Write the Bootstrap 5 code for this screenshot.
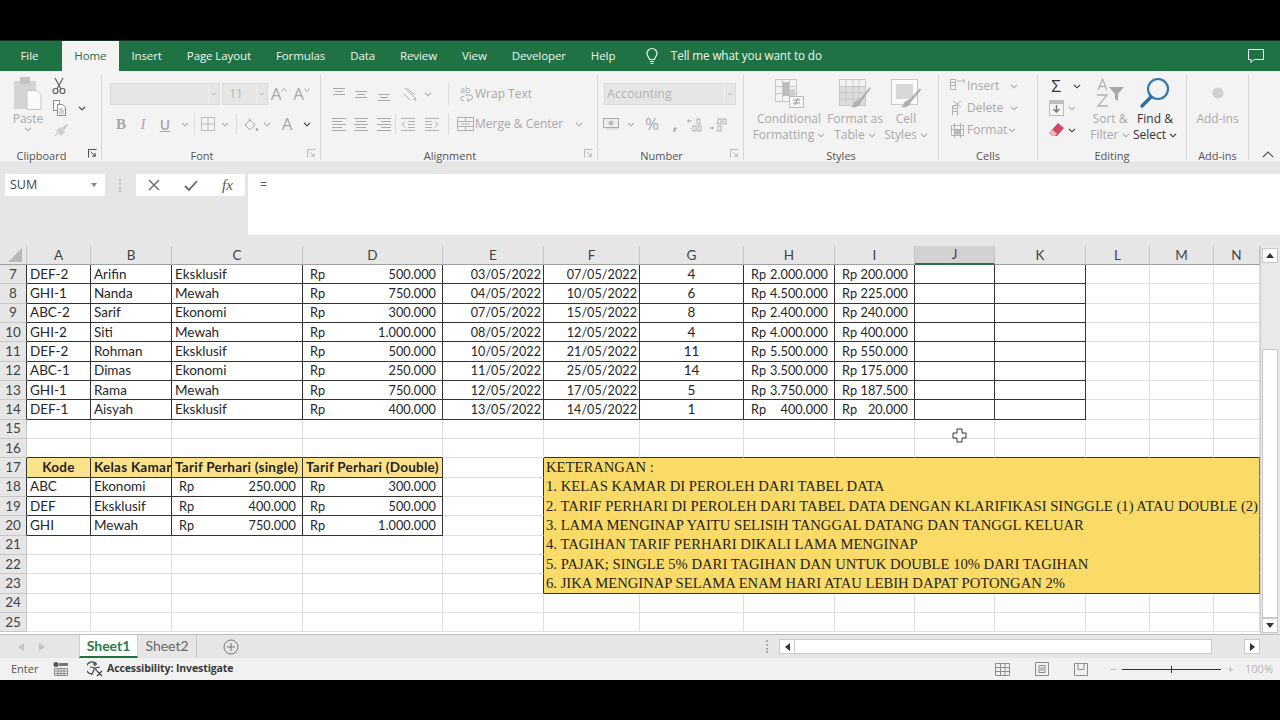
<!DOCTYPE html>
<html lang="id">
<head>
<meta charset="utf-8">
<title>Excel</title>
<link rel="stylesheet" href="https://cdn.jsdelivr.net/npm/bootstrap@5.3.0/dist/css/bootstrap.min.css">
<style>
html,body{margin:0;background:#000;overflow:hidden}
.stage{width:1280px;height:720px;padding:40px 0;background:#000;font-family:"Open Sans","Liberation Sans",sans-serif;font-size:12px;color:#444}
.xlapp{height:640px;background:#e6e6e6}
.titlebar{height:31px;background:#1f7244;color:#f2f7f3;flex:none;border-top:1px solid #12331f}
.titlebar .nav-link{color:#eef5f0;padding:0 12.5px;height:30px;line-height:30px;font-size:11.5px;letter-spacing:-.1px}
.titlebar .nav-link.active{background:#f3f3f3;color:#2a6b48}
.tabfile{margin-left:8px;margin-right:11px}
.tellme{margin-left:16px;gap:11px;letter-spacing:-.1px;color:#eef5f0;font-size:11.7px}
.ribbon{height:92px;background:#f3f3f3;flex:none;padding:4px 0 2px;border-bottom:1px solid #e0e0e0;color:#a9a9a9}
.rg{border-right:1px solid #d6d6d6;flex:none}
.g1{width:102px}.g2{width:219px}.g3{width:277px}.g4{width:146px}.g5{width:195px}.g6{width:99px}.g7{width:149px}.g8{width:62px}
.rbody{height:74px;flex:none}
.rlabel{height:13px;line-height:13px;font-size:11px;color:#555;flex:none}
.launch{width:18px;height:13px;flex:none}
.two{padding-top:8px;gap:8px}
.trow{height:22px;flex:none}
.pl2px{padding-left:2px}.pl6{padding-left:6px}.pl7{padding-left:7px}.pl8{padding-left:8px}
.cell-i{display:inline-flex;align-items:center;justify-content:center;flex:none;height:22px}
.w8{width:8px}.w10{width:10px}.w12{width:12px}.w14{width:14px}.w18{width:18px}.w19{width:19px}.w20{width:20px}.w21{width:21px}.w22{width:22px}.w23{width:23px}.w24{width:24px}.w26{width:26px}.w32{width:32px}
.gap2{width:2px;flex:none}.gap4{width:4px;flex:none}.gap7{width:7px;flex:none}.gap8{width:8px;flex:none}.gap12{width:12px;flex:none}.gap15{width:15px;flex:none}
.vsep{width:1px;height:22px;background:#dcdcdc;flex:none}
.combo{height:22px;background:#e6e6e6;border:1px solid #dadada;color:#b3b3b3;flex:none}
.cb-font{width:110px}.cb-size{width:46px;margin-left:2px}.cb-num{width:132px;padding-left:2px;font-size:12.5px}
.cb-end{width:11px;height:100%;border-left:1px solid #f0f0f0;margin-left:auto}
.cb-size .cb-mid{width:26px;text-align:center}
.bigb{flex:none;line-height:16px;text-align:center;white-space:nowrap}
.bigi{height:36px;flex:none}
.bg-cf{width:74px}.bg-ft{width:58px}.bg-cs{width:44px}.bg-sort{width:46px}.bg-find{width:44px}.bg-add{width:61px}.bg-paste{width:38px;margin-left:9px}
.cf-pad{padding-left:8px}
.dark-t{color:#333}
.col-col1{width:49px;padding-left:8px;flex:none}
.smallc{width:42px;margin-left:3px;flex:none}
.celltxt{width:41px;flex:none}
.bold-i{font-family:"Liberation Serif",serif;font-size:15px;font-weight:700;color:#a8a8a8}
.ital-i{font-family:"Liberation Serif",serif;font-size:15px;font-style:italic;color:#a8a8a8}
.und-i{font-size:14px;text-decoration:underline;color:#a8a8a8;font-weight:600}
.big-a{font-size:17px;line-height:22px;color:#a8a8a8}
.big-s{font-size:17px;line-height:22px;color:#333}
.collapse-b{flex:1;align-items:flex-end;justify-content:center;padding-left:6px;height:87px;color:#666}
.fbar{height:83px;background:#e6e6e6;padding-top:11px;flex:none}
.namebox{width:100px;height:22px;margin-left:5px;background:#fff;padding-left:5px;font-size:12.5px;color:#444;flex:none}
.dots{width:31px;flex:none;height:22px}
.fxbox{width:109px;height:22px;background:#fff;flex:none;color:#777}
.fxin{flex:1;height:61px;margin-left:3px;background:#fff;padding:0 0 0 12px;line-height:22px;font-size:12.5px;color:#555}
.fx-t{font-family:"Liberation Serif",serif;font-style:italic;font-size:15px;color:#555}
.sheetarea{height:388px;flex:none}
.gridwrap{width:1260px;height:388px;background:#fff;overflow:hidden;flex:none}
.sheet{width:1260px;table-layout:fixed;border-collapse:separate;border-spacing:0;margin:0;--bs-table-bg:transparent;font-family:Lato,"Liberation Sans",sans-serif;font-size:13.5px;color:#262626;--bs-body-color:#262626}
.sheet th,.sheet td{padding:0 6px 0 3px;height:19.33px;line-height:17px;border:0;border-right:1px solid #dedede;border-bottom:1px solid #dedede;white-space:nowrap;overflow:hidden;font-weight:400;vertical-align:middle;box-shadow:none}
.sheet thead th{height:19px;background:#e6e6e6;color:#444;text-align:center;padding:0;border-right:1px solid #c4c4c4;border-bottom:1px solid #9f9f9f}
.sheet tbody th{background:#e6e6e6;color:#444;text-align:center;padding:0;border-right:1px solid #c4c4c4;border-bottom:1px solid #c8c8c8}
.c0{width:27px}.ca{width:64px}.cb{width:81px}.cc{width:131px}.cd{width:140px}.ce{width:101px}.cf{width:96px}.cg{width:104px}.ch{width:91px}.ci{width:80px}.cj{width:80px}.ck{width:91px}.cl{width:64px}.cm{width:64px}.cn{width:46px}
.sheet thead th.hot{background:#d2d2d2;border-bottom:2px solid #217346}
.sheet tr.ledger td:nth-child(-n+12),.sheet tr.ref td:nth-child(-n+5){border-right-color:#333;border-bottom-color:#333}
.sheet tr.ledger th,.sheet tr.ref th{border-right-color:#333}
.sheet tr.over td.dk-b{border-bottom-color:#333}
.sheet td.dk-r{border-right-color:#333}
.sheet td.ctr{text-align:center;padding:0}
.sheet td.rgt{text-align:right;padding:0 2px 0 0;font-size:12.6px;letter-spacing:.05px}
.sheet td.mon{padding:0 6px 0 7px;font-size:12.7px;letter-spacing:.05px}
.sheet td.head-y{background:#fde28c;font-weight:700;color:#1f1f1f;padding:0 3px;letter-spacing:.25px}
.sheet td.head-y.ctr{padding:0}
.sheet tr td.note{background:#fadb68;font-family:"Liberation Serif",serif;font-size:14.65px;color:#222;padding:0 0 0 2px;border-right-color:#8a7a3a;border-bottom-color:#fadb68}
.sheet tr td.note-end{border-bottom-color:#333}
.plus-cur{position:absolute;left:952px;top:182px;width:15px;height:15px}
.vscroll{width:20px;height:388px;background:#e9e9e9;padding:2px 2px 1px 1px;border-left:1px solid #cfcfcf;flex:none}
.sbtn{background:#fff;border:1px solid #c9c9c9;color:#333;flex:none}
.vb{height:15px;width:16px}
.vgap{height:86px;flex:none}
.vthumb{flex:1;background:#fff;border:1px solid #c9c9c9;width:16px}
.sheetbar{height:24px;background:#e6e6e6;border-top:1px solid #bdbdbd;flex:none}
.tabarrows{width:79px;gap:15px;padding-left:18px;color:#c4c4c4;flex:none}
.stab{height:23px;width:59px;text-align:center;line-height:22px;font-family:Lato,sans-serif;font-size:14px;color:#666;flex:none}
.stab.on{background:#fff;color:#2a7a4c;font-weight:700;border-bottom:2px solid #217346;border-left:1px solid #cfcfcf;border-right:1px solid #cfcfcf}
.stab.off{border-right:1px solid #c8c8c8}
.addsheet{margin-left:26px;width:20px;color:#777;flex:none}
.hdots{margin-left:auto;width:13px;flex:none;color:#aaa}
.hscroll{width:481px;height:15px;margin-right:20px;flex:none}
.hb{width:16px;height:15px}
.hthumb{width:417px;height:15px;background:#fff;border:1px solid #c9c9c9;border-left:0;flex:none}
.hgap{flex:1}
.statusbar{height:22px;background:#f1f1f1;color:#555;font-size:11px;flex:none}
.st-enter{margin-left:11px;width:42px;flex:none}
.st-macro{width:24px;flex:none}
.st-acc{margin-left:10px;gap:4px;color:#3a3a3a;font-weight:700;font-family:"Open Sans",sans-serif;font-size:10.5px;letter-spacing:-.1px}
.st-views{margin-left:auto;gap:25px;color:#999}
.zoomer{margin-left:22px;width:170px;gap:6px;color:#aaa}
.ztrack{width:99px;height:1px;background:#333;position:relative;flex:none}
.ztick{position:absolute;left:49px;top:-3px;width:1px;height:7px;background:#333}
.pct{margin-left:auto;margin-right:7px;color:#b4b4b4;font-size:11px}
</style>
</head>
<body>
<svg class="d-none" xmlns="http://www.w3.org/2000/svg">
<symbol id="cv" viewBox="0 0 8 5"><path d="M1 .8l3 3 3-3" fill="none" stroke="currentColor" stroke-width="1.1"/></symbol>
<symbol id="lau" viewBox="0 0 10 10"><path d="M.5 9.5v-9h9M3 3l5 5M8 4.500v3.500H4.500" fill="none" stroke="currentColor"/></symbol>
<symbol id="l3t" viewBox="0 0 16 16"><path d="M2 2.500h12M4 5.500h8M2 8.500h12" stroke="currentColor" fill="none"/></symbol>
<symbol id="l3m" viewBox="0 0 16 16"><path d="M2 5.500h12M4 8.500h8M2 11.500h12" stroke="currentColor" fill="none"/></symbol>
<symbol id="l3b" viewBox="0 0 16 16"><path d="M2 8.500h12M4 11.500h8M2 14.500h12" stroke="currentColor" fill="none"/></symbol>
<symbol id="a-l" viewBox="0 0 16 16"><path d="M1 2.500h14M1 5.500h10M1 8.500h14M1 11.500h10M1 14.500h14" stroke="currentColor" fill="none"/></symbol>
<symbol id="a-c" viewBox="0 0 16 16"><path d="M1 2.500h14M3 5.500h10M1 8.500h14M3 11.500h10M1 14.500h14" stroke="currentColor" fill="none"/></symbol>
<symbol id="a-r" viewBox="0 0 16 16"><path d="M1 2.500h14M5 5.500h10M1 8.500h14M5 11.500h10M1 14.500h14" stroke="currentColor" fill="none"/></symbol>
</svg>
<div class="stage">
<div class="xlapp d-flex flex-column">

<!-- tabs -->
<div class="titlebar d-flex align-items-start">
  <ul class="nav flex-nowrap">
    <li class="nav-item tabfile"><a class="nav-link" href="#">File</a></li>
    <li class="nav-item"><a class="nav-link active" href="#">Home</a></li>
    <li class="nav-item"><a class="nav-link" href="#">Insert</a></li>
    <li class="nav-item"><a class="nav-link" href="#">Page Layout</a></li>
    <li class="nav-item"><a class="nav-link" href="#">Formulas</a></li>
    <li class="nav-item"><a class="nav-link" href="#">Data</a></li>
    <li class="nav-item"><a class="nav-link" href="#">Review</a></li>
    <li class="nav-item"><a class="nav-link" href="#">View</a></li>
    <li class="nav-item"><a class="nav-link" href="#">Developer</a></li>
    <li class="nav-item"><a class="nav-link" href="#">Help</a></li>
  </ul>
  <div class="tellme d-flex align-items-center h-100">
    <svg width="16" height="18" viewBox="0 0 16 18" fill="none" stroke="#f0f6f2" stroke-width="1.2"><path d="M5.500 12.500C5 10 3 9 3 6.500a5 5 0 0 1 10 0c0 2.500-2 3.500-2.500 6z"/><path d="M6 14.500h4M6.500 16.500h3"/></svg>
    <span>Tell me what you want to do</span>
  </div>
  <div class="ms-auto d-flex align-items-center h-100 pe-3">
    <svg width="16" height="16" viewBox="0 0 16 16" fill="none" stroke="#f0f6f2"><path d="M.5 1.500h15v10H6l-3 3v-3H.5z"/></svg>
  </div>
</div>

<!-- ribbon -->
<div class="ribbon d-flex">
  <!-- clipboard -->
  <div class="rg g1 d-flex flex-column">
    <div class="rbody d-flex">
      <div class="bigb bg-paste d-flex flex-column align-items-center">
        <div class="bigi d-flex align-items-center justify-content-center">
          <svg width="30" height="35" viewBox="0 0 30 35"><rect x="1" y="5" width="22" height="28" fill="#d4d4d4"/><rect x="7" y="1" width="10" height="7" fill="#c4c4c4"/><path d="M14 14.500h10l4 4v15H14z" fill="#fafafa" stroke="#c6c6c6"/></svg>
        </div>
        <div>Paste</div>
        <svg width="8" height="5"><use href="#cv"/></svg>
      </div>
      <div class="smallc d-flex flex-column">
        <div class="trow d-flex align-items-center"><span class="cell-i w18">
          <svg width="14" height="18" viewBox="0 0 14 18" fill="none" stroke="#5f5f5f" stroke-width="1.200"><circle cx="3.500" cy="14" r="2.500"/><circle cx="10.500" cy="14" r="2.500"/><path d="M5 12L11 1M9 12L3 1"/></svg></span></div>
        <div class="trow d-flex align-items-center"><span class="cell-i w18">
          <svg width="14" height="16" viewBox="0 0 14 16" fill="#fff" stroke="#8a8a8a"><path d="M1.500 .5h6v10h-6z"/><path d="M5.500 4.500h5l3 3v8h-8z"/><path d="M7 9h4M7 11h5M7 13h5" stroke-width=".8"/></svg></span>
          <span class="cell-i w10"></span><span class="cell-i w8 dark-t"><svg width="8" height="5"><use href="#cv"/></svg></span>
        </div>
        <div class="trow d-flex align-items-center"><span class="cell-i w22">
          <svg width="14" height="14" viewBox="0 0 14 14"><path d="M8 5l5-4 1 1-4 5z" fill="#c4c4c4"/><path d="M2 8l4-4 5 5-4 4z" fill="#cfcfcf"/><path d="M1 13l3-3" stroke="#bbb"/></svg></span></div>
      </div>
    </div>
    <div class="rlabel d-flex"><span class="flex-grow-1 text-center">Clipboard</span><span class="launch d-flex justify-content-center dark-t"><svg width="9" height="9"><use href="#lau"/></svg></span></div>
  </div>

  <!-- font -->
  <div class="rg g2 d-flex flex-column">
    <div class="rbody two d-flex flex-column">
      <div class="trow d-flex align-items-center pl8">
        <div class="combo cb-font d-flex align-items-center"><span class="cb-end d-flex align-items-center justify-content-center"><svg width="6" height="4"><use href="#cv"/></svg></span></div>
        <div class="combo cb-size d-flex align-items-center"><span class="cb-mid">11</span><span class="cb-end d-flex align-items-center justify-content-center"><svg width="6" height="4"><use href="#cv"/></svg></span></div>
        <span class="cell-i w22 big-a">A<svg width="6" height="4" class="mb-2"><path d="M.5 3.500l2.500-3 2.500 3" fill="none" stroke="#a8a8a8"/></svg></span>
        <span class="cell-i w23 big-a">A<svg width="6" height="4" class="mb-2"><path d="M.5.5l2.500 3 2.500-3" fill="none" stroke="#a8a8a8"/></svg></span>
      </div>
      <div class="trow d-flex align-items-center pl8">
        <span class="cell-i w22 bold-i">B</span><span class="cell-i w22 ital-i">I</span><span class="cell-i w22 und-i">U</span>
        <span class="cell-i w18"><svg width="8" height="5"><use href="#cv"/></svg></span>
        <span class="vsep"></span>
        <span class="cell-i w26"><svg width="16" height="16" viewBox="0 0 16 16" fill="none" stroke="#bdbdbd"><path d="M1.500 1.500h13v13h-13zM8 1.500v13M1.500 8h13"/></svg></span>
        <span class="cell-i w8"><svg width="8" height="5"><use href="#cv"/></svg></span>
        <span class="gap7"></span>
        <span class="vsep"></span>
        <span class="cell-i w26"><svg width="17" height="17" viewBox="0 0 17 17" fill="none" stroke="#a8a8a8"><path d="M3 9l5-5 5 5-4.500 4.500a1 1 0 0 1-1 0z"/><path d="M7 2l2 3"/><path d="M15 12c-1 1.500-1 2.500 0 3 1-.5 1-1.500 0-3z" fill="#c4c4c4"/></svg></span>
        <span class="cell-i w8"><svg width="8" height="5"><use href="#cv"/></svg></span>
        <span class="cell-i w32 big-a">A</span>
        <span class="cell-i w8 dark-t"><svg width="8" height="5"><use href="#cv"/></svg></span>
      </div>
    </div>
    <div class="rlabel d-flex"><span class="flex-grow-1 text-center">Font</span><span class="launch d-flex justify-content-center text-secondary opacity-50"><svg width="9" height="9"><use href="#lau"/></svg></span></div>
  </div>

  <!-- alignment -->
  <div class="rg g3 d-flex flex-column">
    <div class="rbody two d-flex flex-column">
      <div class="trow d-flex align-items-center pl7">
        <span class="cell-i w22"><svg width="16" height="16"><use href="#l3t"/></svg></span>
        <span class="cell-i w22"><svg width="16" height="16"><use href="#l3m"/></svg></span>
        <span class="cell-i w23"><svg width="16" height="16"><use href="#l3b"/></svg></span>
        <span class="gap2"></span>
        <span class="cell-i w26"><svg width="16" height="16" viewBox="0 0 16 16" fill="none" stroke="#b0b0b0"><path d="M3 2l9 9M5 2l8 7M2 8l6 6"/><path d="M11 13l3 1-1-3"/></svg></span>
        <span class="cell-i w10"><svg width="8" height="5"><use href="#cv"/></svg></span>
        <span class="gap15"></span><span class="vsep"></span><span class="gap8"></span>
        <span class="cell-i w18"><svg width="15" height="18" viewBox="0 0 15 18" fill="none" stroke="#aaa"><text x="1" y="8" font-size="9" font-family="Open Sans, sans-serif" fill="#aaa" stroke="none">ab</text><text x="1" y="16" font-size="9" font-family="Open Sans, sans-serif" fill="#aaa" stroke="none">c</text><path d="M6 10h5a2.500 2.500 0 0 1 0 5H8M9.500 13.500L8 15l1.500 1.500"/></svg></span>
        <span>Wrap Text</span>
      </div>
      <div class="trow d-flex align-items-center pl7">
        <span class="cell-i w22"><svg width="16" height="16"><use href="#a-l"/></svg></span>
        <span class="cell-i w22"><svg width="16" height="16"><use href="#a-c"/></svg></span>
        <span class="cell-i w23"><svg width="16" height="16"><use href="#a-r"/></svg></span>
        <span class="vsep"></span>
        <span class="cell-i w24"><svg width="16" height="16" viewBox="0 0 16 16" fill="none" stroke="#b0b0b0"><path d="M1 2.500h14M8 5.500h7M8 8.500h7M8 11.500h7M1 14.500h14M5 5.500l-3 3 3 3" /></svg></span>
        <span class="cell-i w24"><svg width="16" height="16" viewBox="0 0 16 16" fill="none" stroke="#b0b0b0"><path d="M1 2.500h14M1 5.500h7M1 8.500h7M1 11.500h7M1 14.500h14M11 5.500l3 3-3 3"/></svg></span>
        <span class="gap4"></span><span class="vsep"></span><span class="gap7"></span>
        <span class="cell-i w19"><svg width="17" height="16" viewBox="0 0 17 16" fill="none" stroke="#b0b0b0"><path d="M.5 1.500h16v13H.5zM.5 5.500h16M.5 10.500h16M8.500 1.500v4M8.500 10.500v4M4 8h9"/></svg></span>
        <span>Merge &amp; Center</span>
        <span class="gap12"></span>
        <svg width="8" height="5"><use href="#cv"/></svg>
      </div>
    </div>
    <div class="rlabel d-flex"><span class="flex-grow-1 text-center">Alignment</span><span class="launch d-flex justify-content-center text-secondary opacity-50"><svg width="9" height="9"><use href="#lau"/></svg></span></div>
  </div>

  <!-- number -->
  <div class="rg g4 d-flex flex-column">
    <div class="rbody two d-flex flex-column">
      <div class="trow d-flex align-items-center pl6">
        <div class="combo cb-num d-flex align-items-center">Accounting<span class="cb-end d-flex align-items-center justify-content-center"><svg width="6" height="4"><use href="#cv"/></svg></span></div>
      </div>
      <div class="trow d-flex align-items-center pl2px">
        <span class="cell-i w24"><svg width="18" height="16" viewBox="0 0 18 16"><rect x=".5" y="2.500" width="15" height="9" fill="#eee" stroke="#aaa"/><circle cx="8" cy="7" r="2.500" fill="#bbb"/><path d="M3 13h13" stroke="#ccc"/></svg></span>
        <span class="cell-i w14"><svg width="8" height="5"><use href="#cv"/></svg></span>
        <span class="gap2"></span>
        <span class="cell-i w24 big-a">%</span>
        <span class="cell-i w22 big-a fw-bold">,</span>
        <span class="cell-i w20"><svg width="18" height="16" viewBox="0 0 18 16" fill="#b0b0b0"><path d="M2 3l-2 2 2 2zM2 4.500h3v1H2z"/><rect x="7" y="7" width="1" height="1"/><rect x="3" y="12" width="1" height="1"/><rect x="10" y="3" width="3" height="5" fill="none" stroke="#b0b0b0"/><rect x="6" y="10" width="3" height="5" fill="none" stroke="#b0b0b0"/><rect x="11" y="10" width="3" height="5" fill="none" stroke="#b0b0b0"/></svg></span>
        <span class="cell-i w24"><svg width="18" height="16" viewBox="0 0 18 16" fill="#b0b0b0"><rect x="7" y="7" width="1" height="1"/><rect x="9" y="3" width="3" height="5" fill="none" stroke="#b0b0b0"/><rect x="14" y="3" width="3" height="5" fill="none" stroke="#b0b0b0"/><path d="M3 10l2 2-2 2zM.5 11.500h3v1h-3z"/><rect x="7" y="14" width="1" height="1"/><rect x="9" y="10" width="3" height="5" fill="none" stroke="#b0b0b0"/></svg></span>
      </div>
    </div>
    <div class="rlabel d-flex"><span class="flex-grow-1 text-center">Number</span><span class="launch d-flex justify-content-center text-secondary opacity-50"><svg width="9" height="9"><use href="#lau"/></svg></span></div>
  </div>

  <!-- styles -->
  <div class="rg g5 d-flex flex-column">
    <div class="rbody d-flex cf-pad">
      <div class="bigb bg-cf">
        <div class="bigi d-flex align-items-center justify-content-center">
          <svg width="30" height="30" viewBox="0 0 30 30"><path d="M1.500 1.500h21v22h-21zM8.500 1.500v22M15.500 1.500v22M1.500 8.500h21M1.500 15.500h21" fill="none" stroke="#c8c8c8"/><rect x="9" y="4" width="6" height="14" fill="#bdbdbd"/><rect x="16" y="11" width="5" height="8" fill="#cfcfcf"/><rect x="15.500" y="18.500" width="14" height="11" fill="#f6f6f6" stroke="#bbb"/><path d="M19 22h7M19 25h7M24 20l-3 7" stroke="#999" fill="none"/></svg>
        </div>
        <div>Conditional</div>
        <div>Formatting <svg width="8" height="5"><use href="#cv"/></svg></div>
      </div>
      <div class="bigb bg-ft">
        <div class="bigi d-flex align-items-center justify-content-center">
          <svg width="32" height="30" viewBox="0 0 32 30"><rect x=".5" y="1.500" width="26" height="7" fill="#f3f3f3" stroke="#c8c8c8"/><rect x=".5" y="8.500" width="26" height="19" fill="#dcdcdc" stroke="#c8c8c8"/><path d="M7 1.500v26M14 1.500v26M20 1.500v26M.5 14.500h26M.5 21h26" stroke="#c8c8c8" fill="none"/><path d="M31 9L21 21l-4 2c-3 1-2 5-5 6 5 1 9-1 10-5L31.500 11z" fill="#b0b0b0"/></svg>
        </div>
        <div>Format as</div>
        <div>Table <svg width="8" height="5"><use href="#cv"/></svg></div>
      </div>
      <div class="bigb bg-cs">
        <div class="bigi d-flex align-items-center justify-content-center">
          <svg width="30" height="30" viewBox="0 0 30 30"><rect x=".5" y="1.500" width="26" height="25" fill="#fafafa" stroke="#c8c8c8"/><rect x="5" y="6" width="17" height="15" fill="#d8d8d8"/><path d="M29 10L19 21l-4 2c-3 1-2 5-5 6 5 1 9-1 10-5L30 12z" fill="#b0b0b0"/></svg>
        </div>
        <div>Cell</div>
        <div>Styles <svg width="8" height="5"><use href="#cv"/></svg></div>
      </div>
    </div>
    <div class="rlabel text-center">Styles</div>
  </div>

  <!-- cells -->
  <div class="rg g6 d-flex flex-column">
    <div class="rbody d-flex flex-column pl8">
      <div class="trow d-flex align-items-center"><span class="cell-i w20"><svg width="17" height="16" viewBox="0 0 17 16" fill="none" stroke="#b4b4b4"><path d="M1.500 1.500h5v3h-5zM1.500 4.500v7M6.500 4.500v7M1.500 7.500h5M1.500 11.500h5M8 3h7M14 1l2 2-2 2"/></svg></span><span class="celltxt">Insert</span><span class="cell-i w12"><svg width="8" height="5"><use href="#cv"/></svg></span></div>
      <div class="trow d-flex align-items-center"><span class="cell-i w20"><svg width="17" height="16" viewBox="0 0 17 16" fill="none" stroke="#b4b4b4"><path d="M3.500 5.500h5v3h-5zM3.500 8.500v7M8.500 8.500v7M3.500 11.500h5M4 1l8 6M12 1L4 7"/></svg></span><span class="celltxt">Delete</span><span class="cell-i w12"><svg width="8" height="5"><use href="#cv"/></svg></span></div>
      <div class="trow d-flex align-items-center"><span class="cell-i w20"><svg width="17" height="17" viewBox="0 0 17 17" fill="none" stroke="#b4b4b4"><path d="M2.500 3.500h12v10h-12zM2.500 7.500h12M5.500 1v15M11.500 1v15"/><rect x="6.500" y="8" width="4" height="4" fill="#bbb"/></svg></span><span>Format</span><span class="cell-i w10"><svg width="8" height="5"><use href="#cv"/></svg></span></div>
    </div>
    <div class="rlabel text-center">Cells</div>
  </div>

  <!-- editing -->
  <div class="rg g7 d-flex flex-column">
    <div class="rbody d-flex">
      <div class="col-col1 d-flex flex-column">
        <div class="trow d-flex align-items-center"><span class="cell-i w20 big-s">Σ</span><span class="cell-i w21 dark-t"><svg width="8" height="5"><use href="#cv"/></svg></span></div>
        <div class="trow d-flex align-items-center"><span class="cell-i w20"><svg width="15" height="16" viewBox="0 0 15 16"><rect x=".5" y=".5" width="14" height="15" fill="#f4f4f4" stroke="#bdbdbd"/><rect x="1" y="1" width="13" height="3" fill="#bdbdbd"/><path d="M7.500 5v6M4.500 9l3 3 3-3" fill="none" stroke="#777" stroke-width="1.400"/></svg></span><span class="cell-i w12"><svg width="8" height="5"><use href="#cv"/></svg></span></div>
        <div class="trow d-flex align-items-center"><span class="cell-i w20"><svg width="16" height="14" viewBox="0 0 16 14"><path d="M10 0l6 5-7 8H4L1 10z" fill="#d8455e"/><path d="M1 10l3-3.500 5 4L7 13H4z" fill="#eab4bf"/></svg></span><span class="cell-i w12 dark-t"><svg width="8" height="5"><use href="#cv"/></svg></span></div>
      </div>
      <div class="bigb bg-sort">
        <div class="bigi d-flex align-items-center justify-content-center">
          <svg width="34" height="30" viewBox="0 0 34 30"><path d="M5 12L9.500 1 14 12M6.500 8.500h6M4 17h10L5 28h10" fill="none" stroke="#b4b4b4" stroke-width="1.300"/><path d="M16 9h15l-6 7v7l-3-2v-5z" fill="#a8a8a8"/></svg>
        </div>
        <div>Sort &amp;</div>
        <div>Filter <svg width="8" height="5"><use href="#cv"/></svg></div>
      </div>
      <div class="bigb bg-find dark-t">
        <div class="bigi d-flex align-items-center justify-content-center">
          <svg width="32" height="32" viewBox="0 0 32 32" fill="none"><circle cx="19" cy="12" r="10" stroke="#2f78b4" stroke-width="2.200"/><path d="M12 20L3 29" stroke="#2b6ea8" stroke-width="3.400" stroke-linecap="round"/></svg>
        </div>
        <div>Find &amp;</div>
        <div>Select <svg width="8" height="5"><use href="#cv"/></svg></div>
      </div>
    </div>
    <div class="rlabel text-center">Editing</div>
  </div>

  <!-- add-ins -->
  <div class="rg g8 d-flex flex-column">
    <div class="rbody d-flex">
      <div class="bigb bg-add">
        <div class="bigi d-flex align-items-center justify-content-center"><svg width="14" height="14" viewBox="0 0 14 14"><circle cx="7" cy="7" r="5.500" fill="#d0d0d0"/></svg></div>
        <div>Add-ins</div>
      </div>
    </div>
    <div class="rlabel text-center">Add-ins</div>
  </div>
  <div class="collapse-b d-flex"><svg width="12" height="7" viewBox="0 0 12 7" fill="none" stroke="#555" stroke-width="1.200" class="mb-1"><path d="M1 6l5-5 5 5"/></svg></div>
</div>

<!-- formula bar -->
<div class="fbar d-flex align-items-start">
  <div class="namebox d-flex align-items-center justify-content-between pe-2"><span>SUM</span><svg width="6" height="4" viewBox="0 0 6 4"><path d="M0 0h6L3 4z" fill="#888"/></svg></div>
  <div class="dots d-flex align-items-center justify-content-center"><svg width="3" height="13" viewBox="0 0 3 13" fill="#bbb"><rect y="0" width="2" height="2"/><rect y="4" width="2" height="2"/><rect y="8" width="2" height="2"/><rect y="11" width="2" height="2"/></svg></div>
  <div class="fxbox d-flex align-items-center justify-content-around">
    <svg width="12" height="12" viewBox="0 0 12 12" fill="none" stroke="#666" stroke-width="1.400"><path d="M1 1l10 10M11 1L1 11"/></svg>
    <svg width="14" height="11" viewBox="0 0 14 11" fill="none" stroke="#666" stroke-width="1.800"><path d="M1 6l4 4 8-9"/></svg>
    <span class="fx-t">fx</span>
  </div>
  <div class="fxin">=</div>
</div>

<!-- grid -->
<div class="sheetarea d-flex">
<div class="gridwrap position-relative">
<table class="table sheet">
<colgroup><col class="c0"><col class="ca"><col class="cb"><col class="cc"><col class="cd"><col class="ce"><col class="cf"><col class="cg"><col class="ch"><col class="ci"><col class="cj"><col class="ck"><col class="cl"><col class="cm"><col class="cn"></colgroup>
<thead><tr><th><svg width="14" height="14" viewBox="0 0 14 14" class="d-block ms-auto me-1"><path d="M14 0v14H0z" fill="#b8b8b8"/></svg></th><th>A</th><th>B</th><th>C</th><th>D</th><th>E</th><th>F</th><th>G</th><th>H</th><th>I</th><th class="hot">J</th><th>K</th><th>L</th><th>M</th><th>N</th></tr></thead>
<tbody>
<tr class="ledger"><th>7</th><td>DEF-2</td><td>Arifin</td><td>Eksklusif</td><td class="mon"><div class="d-flex justify-content-between"><span>Rp</span><span>500.000</span></div></td><td class="rgt">03/05/2022</td><td class="rgt">07/05/2022</td><td class="ctr">4</td><td class="mon"><div class="d-flex justify-content-between"><span>Rp</span><span>2.000.000</span></div></td><td class="mon"><div class="d-flex justify-content-between"><span>Rp</span><span>200.000</span></div></td><td></td><td></td><td></td><td></td><td></td></tr>
<tr class="ledger"><th>8</th><td>GHI-1</td><td>Nanda</td><td>Mewah</td><td class="mon"><div class="d-flex justify-content-between"><span>Rp</span><span>750.000</span></div></td><td class="rgt">04/05/2022</td><td class="rgt">10/05/2022</td><td class="ctr">6</td><td class="mon"><div class="d-flex justify-content-between"><span>Rp</span><span>4.500.000</span></div></td><td class="mon"><div class="d-flex justify-content-between"><span>Rp</span><span>225.000</span></div></td><td></td><td></td><td></td><td></td><td></td></tr>
<tr class="ledger"><th>9</th><td>ABC-2</td><td>Sarif</td><td>Ekonomi</td><td class="mon"><div class="d-flex justify-content-between"><span>Rp</span><span>300.000</span></div></td><td class="rgt">07/05/2022</td><td class="rgt">15/05/2022</td><td class="ctr">8</td><td class="mon"><div class="d-flex justify-content-between"><span>Rp</span><span>2.400.000</span></div></td><td class="mon"><div class="d-flex justify-content-between"><span>Rp</span><span>240.000</span></div></td><td></td><td></td><td></td><td></td><td></td></tr>
<tr class="ledger"><th>10</th><td>GHI-2</td><td>Siti</td><td>Mewah</td><td class="mon"><div class="d-flex justify-content-between"><span>Rp</span><span>1.000.000</span></div></td><td class="rgt">08/05/2022</td><td class="rgt">12/05/2022</td><td class="ctr">4</td><td class="mon"><div class="d-flex justify-content-between"><span>Rp</span><span>4.000.000</span></div></td><td class="mon"><div class="d-flex justify-content-between"><span>Rp</span><span>400.000</span></div></td><td></td><td></td><td></td><td></td><td></td></tr>
<tr class="ledger"><th>11</th><td>DEF-2</td><td>Rohman</td><td>Eksklusif</td><td class="mon"><div class="d-flex justify-content-between"><span>Rp</span><span>500.000</span></div></td><td class="rgt">10/05/2022</td><td class="rgt">21/05/2022</td><td class="ctr">11</td><td class="mon"><div class="d-flex justify-content-between"><span>Rp</span><span>5.500.000</span></div></td><td class="mon"><div class="d-flex justify-content-between"><span>Rp</span><span>550.000</span></div></td><td></td><td></td><td></td><td></td><td></td></tr>
<tr class="ledger"><th>12</th><td>ABC-1</td><td>Dimas</td><td>Ekonomi</td><td class="mon"><div class="d-flex justify-content-between"><span>Rp</span><span>250.000</span></div></td><td class="rgt">11/05/2022</td><td class="rgt">25/05/2022</td><td class="ctr">14</td><td class="mon"><div class="d-flex justify-content-between"><span>Rp</span><span>3.500.000</span></div></td><td class="mon"><div class="d-flex justify-content-between"><span>Rp</span><span>175.000</span></div></td><td></td><td></td><td></td><td></td><td></td></tr>
<tr class="ledger"><th>13</th><td>GHI-1</td><td>Rama</td><td>Mewah</td><td class="mon"><div class="d-flex justify-content-between"><span>Rp</span><span>750.000</span></div></td><td class="rgt">12/05/2022</td><td class="rgt">17/05/2022</td><td class="ctr">5</td><td class="mon"><div class="d-flex justify-content-between"><span>Rp</span><span>3.750.000</span></div></td><td class="mon"><div class="d-flex justify-content-between"><span>Rp</span><span>187.500</span></div></td><td></td><td></td><td></td><td></td><td></td></tr>
<tr class="ledger"><th>14</th><td>DEF-1</td><td>Aisyah</td><td>Eksklusif</td><td class="mon"><div class="d-flex justify-content-between"><span>Rp</span><span>400.000</span></div></td><td class="rgt">13/05/2022</td><td class="rgt">14/05/2022</td><td class="ctr">1</td><td class="mon"><div class="d-flex justify-content-between"><span>Rp</span><span>400.000</span></div></td><td class="mon"><div class="d-flex justify-content-between"><span>Rp</span><span>20.000</span></div></td><td></td><td></td><td></td><td></td><td></td></tr>
<tr><th>15</th><td></td><td></td><td></td><td></td><td></td><td></td><td></td><td></td><td></td><td></td><td></td><td></td><td></td><td></td></tr>
<tr class="over"><th>16</th><td class="dk-b"></td><td class="dk-b"></td><td class="dk-b"></td><td class="dk-b"></td><td></td><td class="dk-b"></td><td class="dk-b"></td><td class="dk-b"></td><td class="dk-b"></td><td class="dk-b"></td><td class="dk-b"></td><td class="dk-b"></td><td class="dk-b"></td><td class="dk-b"></td></tr>
<tr class="ref"><th>17</th><td class="head-y ctr">Kode</td><td class="head-y">Kelas Kamar</td><td class="head-y">Tarif Perhari (single)</td><td class="head-y">Tarif Perhari (Double)</td><td class="dk-r"></td><td colspan="9" class="note">KETERANGAN :</td></tr>
<tr class="ref"><th>18</th><td>ABC</td><td>Ekonomi</td><td class="mon"><div class="d-flex justify-content-between"><span>Rp</span><span>250.000</span></div></td><td class="mon"><div class="d-flex justify-content-between"><span>Rp</span><span>300.000</span></div></td><td class="dk-r"></td><td colspan="9" class="note">1. KELAS KAMAR DI PEROLEH DARI TABEL DATA</td></tr>
<tr class="ref"><th>19</th><td>DEF</td><td>Eksklusif</td><td class="mon"><div class="d-flex justify-content-between"><span>Rp</span><span>400.000</span></div></td><td class="mon"><div class="d-flex justify-content-between"><span>Rp</span><span>500.000</span></div></td><td class="dk-r"></td><td colspan="9" class="note">2. TARIF PERHARI DI PEROLEH DARI TABEL DATA DENGAN KLARIFIKASI SINGGLE (1) ATAU DOUBLE (2)</td></tr>
<tr class="ref"><th>20</th><td>GHI</td><td>Mewah</td><td class="mon"><div class="d-flex justify-content-between"><span>Rp</span><span>750.000</span></div></td><td class="mon"><div class="d-flex justify-content-between"><span>Rp</span><span>1.000.000</span></div></td><td class="dk-r"></td><td colspan="9" class="note">3. LAMA MENGINAP YAITU SELISIH TANGGAL DATANG DAN TANGGL KELUAR</td></tr>
<tr><th>21</th><td></td><td></td><td></td><td></td><td class="dk-r"></td><td colspan="9" class="note">4. TAGIHAN TARIF PERHARI DIKALI LAMA MENGINAP</td></tr>
<tr><th>22</th><td></td><td></td><td></td><td></td><td class="dk-r"></td><td colspan="9" class="note">5. PAJAK; SINGLE 5% DARI TAGIHAN DAN UNTUK DOUBLE 10% DARI TAGIHAN</td></tr>
<tr><th>23</th><td></td><td></td><td></td><td></td><td class="dk-r"></td><td colspan="9" class="note note-end">6. JIKA MENGINAP SELAMA ENAM HARI ATAU LEBIH DAPAT POTONGAN 2%</td></tr>
<tr><th>24</th><td></td><td></td><td></td><td></td><td></td><td></td><td></td><td></td><td></td><td></td><td></td><td></td><td></td><td></td></tr>
<tr><th>25</th><td></td><td></td><td></td><td></td><td></td><td></td><td></td><td></td><td></td><td></td><td></td><td></td><td></td><td></td></tr>
</tbody>
</table>
<svg class="plus-cur" viewBox="0 0 15 15"><path d="M5 1h5v4h4v5h-4v4H5v-4H1V5h4z" fill="#fff" stroke="#333"/></svg>
</div>
<div class="vscroll d-flex flex-column">
  <div class="sbtn vb d-flex align-items-center justify-content-center"><svg width="8" height="5" viewBox="0 0 8 5"><path d="M0 5l4-5 4 5z" fill="#333"/></svg></div>
  <div class="vgap"></div>
  <div class="vthumb"></div>
  <div class="sbtn vb d-flex align-items-center justify-content-center"><svg width="8" height="5" viewBox="0 0 8 5"><path d="M0 0l4 5 4-5z" fill="#333"/></svg></div>
</div>
</div>

<!-- sheet tabs -->
<div class="sheetbar d-flex align-items-center">
  <div class="tabarrows d-flex align-items-center"><svg width="6" height="8" viewBox="0 0 6 8"><path d="M6 0L0 4l6 4z" fill="currentColor"/></svg><svg width="6" height="8" viewBox="0 0 6 8"><path d="M0 0l6 4-6 4z" fill="currentColor"/></svg></div>
  <div class="stab on">Sheet1</div>
  <div class="stab off">Sheet2</div>
  <div class="addsheet d-flex"><svg width="16" height="16" viewBox="0 0 16 16" fill="none" stroke="currentColor"><circle cx="8" cy="8" r="7"/><path d="M8 4v8M4 8h8"/></svg></div>
  <div class="hdots d-flex"><svg width="3" height="13" viewBox="0 0 3 13" fill="currentColor"><rect y="0" width="2" height="2"/><rect y="4" width="2" height="2"/><rect y="8" width="2" height="2"/><rect y="11" width="2" height="2"/></svg></div>
  <div class="hscroll d-flex">
    <div class="sbtn hb d-flex align-items-center justify-content-center"><svg width="5" height="8" viewBox="0 0 5 8"><path d="M5 0L0 4l5 4z" fill="#333"/></svg></div>
    <div class="hthumb"></div>
    <div class="hgap"></div>
    <div class="sbtn hb d-flex align-items-center justify-content-center"><svg width="5" height="8" viewBox="0 0 5 8"><path d="M0 0l5 4-5 4z" fill="#333"/></svg></div>
  </div>
</div>

<!-- status -->
<div class="statusbar d-flex align-items-center">
  <span class="st-enter">Enter</span>
  <span class="st-macro d-flex"><svg width="16" height="14" viewBox="0 0 16 14"><circle cx="3" cy="2.500" r="2.500" fill="#555"/><rect x="6" y="1" width="9" height="3" fill="#777"/><path d="M1.500 6.500h13v7h-13zM1.500 9h13M1.500 11.500h13M5 6.500v7M8 6.500v7M11 6.500v7" fill="none" stroke="#777" stroke-width=".8"/></svg></span>
  <span class="st-acc d-flex align-items-center">
    <svg width="16" height="16" viewBox="0 0 16 16" fill="none" stroke="#444" stroke-width="1.200"><path d="M9 2.500A6 6 0 1 0 5 13"/><circle cx="8" cy="3" r="1.200"/><path d="M3 6l5 1 5-1M7.500 7l-1 3-2 4M8.500 7l1 3M10 10l5 5M15 10l-5 5"/></svg>
    <span>Accessibility: Investigate</span>
  </span>
  <div class="st-views d-flex align-items-center">
    <svg width="15" height="13" viewBox="0 0 15 13" fill="none" stroke="#8e8e8e"><path d="M.5.5h14v12H.5zM.5 4.500h14M.5 8.500h14M5.500.5v12M10 .5v12"/></svg>
    <svg width="14" height="14" viewBox="0 0 14 14" fill="none" stroke="#8e8e8e"><path d="M.5.5h13v13H.5zM4 3.500h6v7H4zM5 6h4M5 8h4"/></svg>
    <svg width="14" height="13" viewBox="0 0 14 13" fill="none" stroke="#8e8e8e"><path d="M.5.5h13v12H.5zM4 .5v6h6v-6"/></svg>
  </div>
  <div class="zoomer d-flex align-items-center">
    <span>−</span><span class="ztrack"><span class="ztick"></span></span><span>+</span><span class="pct">100%</span>
  </div>
</div>

</div>
</div>
<script src="https://cdn.jsdelivr.net/npm/bootstrap@5.3.0/dist/js/bootstrap.bundle.min.js"></script>
</body>
</html>
